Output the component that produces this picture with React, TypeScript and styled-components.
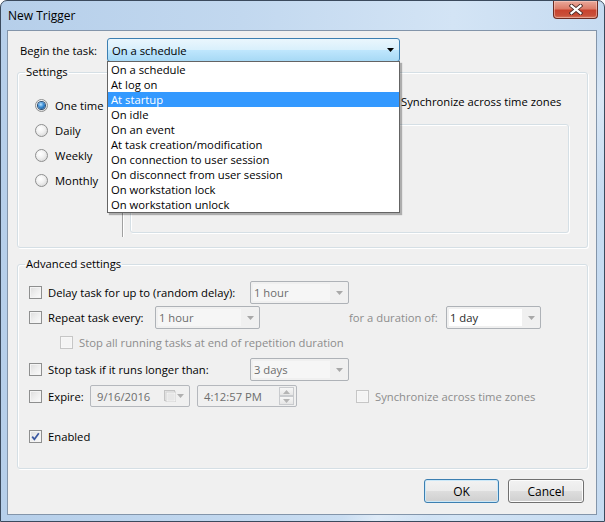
import React from 'react';
import styled, { createGlobalStyle } from 'styled-components';

const FONT = `"Segoe UI", "Open Sans", "Noto Sans", sans-serif`;

const Global = createGlobalStyle`
  html, body { margin: 0; padding: 0; background: #ffffff; }
  body { font-family: ${FONT}; font-size: 11.25px; color: #000; }
  * { box-sizing: border-box; }
`;

const Window = styled.div`
  width: 605px;
  height: 522px;
  border: 1px solid #3b4a5d;
  border-radius: 7px 7px 0 0;
  overflow: hidden;
  display: flex;
  flex-direction: column;
  background:
    linear-gradient(118deg, rgba(255,255,255,0) 0%, rgba(255,255,255,0) 70%, rgba(255,255,255,0.35) 74%, rgba(255,255,255,0) 80%, rgba(255,255,255,0) 100%),
    linear-gradient(to right, #b6cfea 0%, #c2d8ef 40%, #d3e4f5 75%, #c6dbf1 100%);
`;

const TitleBar = styled.div`
  height: 29px;
  flex: none;
  display: flex;
  align-items: flex-start;
  padding-left: 7px;
`;

const Title = styled.div`
  font-size: 12px;
  line-height: 29px;
  color: #000;
`;

const CloseBtn = styled.div`
  margin-left: auto;
  margin-right: 6px;
  width: 45px;
  height: 18px;
  border: 1px solid #6b2b22;
  border-top: none;
  border-radius: 0 0 4px 4px;
  background: linear-gradient(to bottom, #e9a99b 0%, #dc7d6a 45%, #c8432e 55%, #c9503a 85%, #d77a5f 100%);
  box-shadow: inset 0 0 0 1px rgba(255, 220, 210, 0.45);
  display: flex;
  align-items: center;
  justify-content: center;
`;

const Client = styled.div`
  flex: 1;
  margin: 0 7px 6px 6px;
  border: 1px solid #8395aa;
  background: #f0f0f0;
  padding: 7px 8px 0 9px;
  display: flex;
  flex-direction: column;
`;

const BeginRow = styled.div`
  display: flex;
  align-items: center;
  height: 24px;
  padding-left: 3px;
  position: relative;
  z-index: 5;
`;

const BeginLabel = styled.div`
  width: 87px;
`;

const ComboWrap = styled.div`
  position: relative;
  width: 293px;
  height: 24px;
`;

const OpenCombo = styled.div`
  height: 100%;
  border: 1px solid #3c7fb1;
  border-radius: 3px;
  background: linear-gradient(to bottom, #eaf6fd 0%, #d9f0fc 48%, #bee6fd 52%, #a7d9f5 100%);
  display: flex;
  align-items: center;
  padding-left: 4px;
`;

const ArrowZone = styled.div<{ $w: number }>`
  margin-left: auto;
  width: ${p => p.$w}px;
  height: 100%;
  display: flex;
  align-items: center;
  justify-content: center;
  flex: none;
`;

const DropList = styled.div`
  position: absolute;
  top: 23px;
  left: 0;
  width: 293px;
  background: #fff;
  border: 1px solid #646464;
  box-shadow: 2px 2px 1px rgba(0, 0, 0, 0.28);
`;

const DropItem = styled.div<{ $sel?: boolean }>`
  height: 15px;
  line-height: 15px;
  padding-left: 3px;
  white-space: nowrap;
  background: ${p => (p.$sel ? '#3399ff' : 'transparent')};
  color: ${p => (p.$sel ? '#ffffff' : '#000000')};
`;

const Group = styled.fieldset<{ $mt: number }>`
  margin: ${p => p.$mt}px 0 0 0;
  padding: 0;
  border: 1px solid #d5dfe5;
  border-radius: 3px;
  box-shadow: inset 1px 1px 0 #ffffff, 1px 1px 0 #ffffff;
  min-width: 0;
`;

const Legend = styled.legend`
  margin-left: 7px;
  padding: 0 1px;
  line-height: 14px;
  font-size: inherit;
`;

const SettingsBody = styled.div`
  height: 168px;
  display: flex;
  padding-left: 17px;
`;

const RadioColumn = styled.div`
  width: 87px;
  padding-top: 14px;
  display: flex;
  flex-direction: column;
`;

const RadioRow = styled.div`
  height: 25px;
  display: flex;
  align-items: center;
  gap: 7px;
`;

const Radio = styled.span<{ $on?: boolean }>`
  width: 13px;
  height: 13px;
  border-radius: 50%;
  border: 1px solid #8e8f8f;
  background: radial-gradient(circle at 40% 35%, #ffffff 0%, #f2f2f2 40%, #cfcfcf 100%);
  display: flex;
  align-items: center;
  justify-content: center;
  flex: none;
  &::after {
    content: '';
    display: ${p => (p.$on ? 'block' : 'none')};
    width: 7px;
    height: 7px;
    border-radius: 50%;
    background: radial-gradient(circle at 40% 35%, #b9e3ff 0%, #3b8dd5 45%, #0b3f78 100%);
    box-shadow: 0 0 0 1px #2a4d73;
  }
`;

const Separator = styled.div`
  margin-top: 9px;
  height: 149px;
  width: 2px;
  border-left: 1px solid #a0a0a0;
  border-right: 1px solid #ffffff;
  flex: none;
`;

const RightPane = styled.div`
  margin-left: 6px;
  padding-top: 11px;
  display: flex;
  flex-direction: column;
`;

const StartRow = styled.div`
  height: 23px;
  display: flex;
  align-items: center;
  padding-left: 253px;
`;

const InnerBox = styled.div`
  margin-top: 11px;
  width: 439px;
  height: 109px;
  border: 1px solid #d5dfe5;
  border-radius: 3px;
  box-shadow: inset 1px 1px 0 #ffffff, 1px 1px 0 #ffffff;
`;

const AdvBody = styled.div`
  height: 197px;
  padding: 10px 0 0 11px;
  display: flex;
  flex-direction: column;
`;

const Row = styled.div<{ $mt: number; $h: number; $pl?: number }>`
  margin-top: ${p => p.$mt}px;
  height: ${p => p.$h}px;
  padding-left: ${p => p.$pl ?? 0}px;
  display: flex;
  align-items: center;
  flex: none;
`;

const Text = styled.span<{ $w?: number; $ml?: number; $dim?: boolean }>`
  width: ${p => (p.$w ? `${p.$w}px` : 'auto')};
  margin-left: ${p => p.$ml ?? 0}px;
  color: ${p => (p.$dim ? '#8d8d8d' : '#000000')};
  white-space: nowrap;
  flex: none;
`;

const CheckBox = styled.span<{ $dim?: boolean; $ml?: number }>`
  width: 13px;
  height: 13px;
  margin-left: ${p => p.$ml ?? 0}px;
  margin-right: 6px;
  border: 1px solid ${p => (p.$dim ? '#c6c6c6' : '#8e8f8f')};
  background: ${p =>
    p.$dim
      ? '#f4f4f4'
      : 'linear-gradient(135deg, #dcdcdc 0%, #eeeeee 50%, #fbfbfb 100%)'};
  box-shadow: inset 0 0 0 1px ${p => (p.$dim ? '#f7f7f7' : '#f4f4f4')};
  display: flex;
  align-items: center;
  justify-content: center;
  flex: none;
`;

const Combo = styled.div<{ $w: number; $h?: number; $ml?: number }>`
  width: ${p => p.$w}px;
  height: ${p => p.$h ?? 23}px;
  margin-left: ${p => p.$ml ?? 0}px;
  border: 1px solid #aeb2b7;
  border-radius: 2px;
  background: #f0f0f0;
  display: flex;
  align-items: stretch;
  flex: none;
`;

const ComboField = styled.div<{ $bg: string; $fg: string }>`
  flex: 1;
  margin: 2px 0 2px 2px;
  padding-left: 1px;
  background: ${p => p.$bg};
  color: ${p => p.$fg};
  display: flex;
  align-items: center;
  white-space: nowrap;
`;

const Picker = styled.div<{ $w: number; $ml?: number }>`
  width: ${p => p.$w}px;
  height: 22px;
  margin-left: ${p => p.$ml ?? 0}px;
  border: 1px solid #b5b8bd;
  border-radius: 2px;
  background: #f0f0f0;
  display: flex;
  align-items: center;
  padding-left: 6px;
  color: #6d6d6d;
  flex: none;
`;

const PickerTail = styled.div`
  margin-left: auto;
  display: flex;
  align-items: center;
  gap: 1px;
  padding-right: 5px;
`;

const Spin = styled.div`
  margin-left: auto;
  margin-right: 2px;
  display: flex;
  flex-direction: column;
`;

const SpinBtn = styled.div`
  width: 15px;
  height: 9px;
  border: 1px solid #c9cbce;
  background: linear-gradient(to bottom, #f7f7f7, #e6e6e6);
  display: flex;
  align-items: center;
  justify-content: center;
`;

const ButtonRow = styled.div`
  margin-top: 10px;
  display: flex;
  justify-content: flex-end;
  gap: 9px;
  padding-right: 4px;
`;

const Button = styled.div<{ $def?: boolean; $w: number }>`
  width: ${p => p.$w}px;
  height: 24px;
  border: 1px solid ${p => (p.$def ? '#3c7fb1' : '#707070')};
  border-radius: 3px;
  background: linear-gradient(to bottom, #f2f2f2 0%, #ebebeb 48%, #dddddd 52%, #cfcfcf 100%);
  box-shadow: inset 0 0 0 1px ${p => (p.$def ? '#cbe8f8' : '#fcfcfc')};
  display: flex;
  align-items: center;
  justify-content: center;
  font-size: 12px;
`;

const Tri = ({ color, up }: { color: string; up?: boolean }) => (
  <svg width="7" height="4" viewBox="0 0 7 4">
    <path d={up ? 'M0 4h7L3.5 0z' : 'M0 0h7L3.5 4z'} fill={color} />
  </svg>
);

const Check = () => (
  <svg width="9" height="9" viewBox="0 0 9 9">
    <path d="M1.2 4.6 L3.4 7.3 L7.8 1.2" fill="none" stroke="#3b58a1" strokeWidth="1.7" />
  </svg>
);

const CalIcon = () => (
  <svg width="12" height="12" viewBox="0 0 12 12">
    <rect x="0.5" y="0.5" width="10" height="10" fill="#ececec" stroke="#c3c3c3" />
    <rect x="2" y="2" width="10" height="10" fill="#f3f3f3" stroke="#cfcfcf" />
    <path d="M3 5h8M3 7h8M3 9h8M5 3v8M7 3v8M9 3v8" stroke="#e0e0e0" strokeWidth="0.7" />
  </svg>
);

const items = [
  'On a schedule',
  'At log on',
  'At startup',
  'On idle',
  'On an event',
  'At task creation/modification',
  'On connection to user session',
  'On disconnect from user session',
  'On workstation lock',
  'On workstation unlock',
];

const DisabledCombo = ({ w, value, ml, fg = '#6d6d6d', bg = '#f6f6f6' }: { w: number; value: string; ml?: number; fg?: string; bg?: string }) => (
  <Combo $w={w} $ml={ml}>
    <ComboField $bg={bg} $fg={fg}>{value}</ComboField>
    <ArrowZone $w={18}>
      <Tri color="#a8a8a8" />
    </ArrowZone>
  </Combo>
);

export default function App() {
  return (
    <>
      <Global />
      <Window>
        <TitleBar>
          <Title>New Trigger</Title>
          <CloseBtn>
            <svg width="14" height="11" viewBox="0 0 14 11">
              <path d="M2.5 1.8 L11.5 9.2 M11.5 1.8 L2.5 9.2" stroke="#4a2a26" strokeWidth="4" strokeLinecap="square" />
              <path d="M2.5 1.8 L11.5 9.2 M11.5 1.8 L2.5 9.2" stroke="#ffffff" strokeWidth="2.2" strokeLinecap="square" />
            </svg>
          </CloseBtn>
        </TitleBar>
        <Client>
          <BeginRow>
            <BeginLabel>Begin the task:</BeginLabel>
            <ComboWrap>
              <OpenCombo>
                On a schedule
                <ArrowZone $w={17}>
                  <Tri color="#000000" />
                </ArrowZone>
              </OpenCombo>
              <DropList>
                {items.map(t => (
                  <DropItem key={t} $sel={t === 'At startup'}>
                    {t}
                  </DropItem>
                ))}
              </DropList>
            </ComboWrap>
          </BeginRow>

          <Group $mt={3}>
            <Legend>Settings</Legend>
            <SettingsBody>
              <RadioColumn>
                <RadioRow><Radio $on />One time</RadioRow>
                <RadioRow><Radio />Daily</RadioRow>
                <RadioRow><Radio />Weekly</RadioRow>
                <RadioRow><Radio />Monthly</RadioRow>
              </RadioColumn>
              <Separator />
              <RightPane>
                <StartRow>
                  <CheckBox />
                  <Text $ml={-1}>Synchronize across time zones</Text>
                </StartRow>
                <InnerBox />
              </RightPane>
            </SettingsBody>
          </Group>

          <Group $mt={9}>
            <Legend>Advanced settings</Legend>
            <AdvBody>
              <Row $mt={0} $h={23}>
                <CheckBox />
                <Text $w={202}>Delay task for up to (random delay):</Text>
                <DisabledCombo w={99} value="1 hour" />
              </Row>
              <Row $mt={2} $h={23}>
                <CheckBox />
                <Text $w={107}>Repeat task every:</Text>
                <DisabledCombo w={105} value="1 hour" />
                <Text $w={97} $ml={89} $dim>for a duration of:</Text>
                <DisabledCombo w={95} value="1 day" fg="#2a2a2a" bg="#ffffff" />
              </Row>
              <Row $mt={2} $h={23} $pl={31}>
                <CheckBox $dim />
                <Text $dim>Stop all running tasks at end of repetition duration</Text>
              </Row>
              <Row $mt={4} $h={23}>
                <CheckBox />
                <Text $w={202}>Stop task if it runs longer than:</Text>
                <DisabledCombo w={99} value="3 days" />
              </Row>
              <Row $mt={4} $h={22}>
                <CheckBox />
                <Text $w={42}>Expire:</Text>
                <Picker $w={100}>
                  9/16/2016
                  <PickerTail>
                    <CalIcon />
                    <Tri color="#b0b0b0" />
                  </PickerTail>
                </Picker>
                <Picker $w={100} $ml={7}>
                  4:12:57 PM
                  <Spin>
                    <SpinBtn><Tri color="#b5b5b5" up /></SpinBtn>
                    <SpinBtn><Tri color="#b5b5b5" /></SpinBtn>
                  </Spin>
                </Picker>
                <CheckBox $dim $ml={59} />
                <Text $dim>Synchronize across time zones</Text>
              </Row>
              <Row $mt={18} $h={23}>
                <CheckBox>
                  <Check />
                </CheckBox>
                <Text>Enabled</Text>
              </Row>
            </AdvBody>
          </Group>

          <ButtonRow>
            <Button $def $w={75}>OK</Button>
            <Button $w={76}>Cancel</Button>
          </ButtonRow>
        </Client>
      </Window>
    </>
  );
}
